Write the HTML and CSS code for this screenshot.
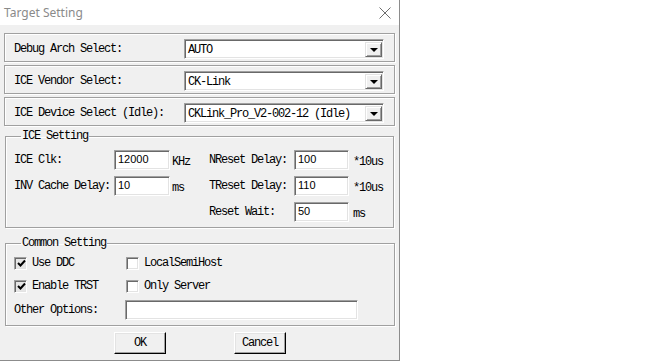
FILE: index.html
```html
<!DOCTYPE html>
<html lang="en">
<head>
  <meta charset="UTF-8" />
  <title>Target Setting</title>
  <link rel="stylesheet" href="styles.css">
</head>
<body>
  <div class="dialog">
    <div class="titlebar">
      <span class="title">Target Setting</span>
      <svg class="close" width="12" height="12" viewBox="0 0 12 12">
        <path d="M0.5 0.5 L11.5 11.5 M11.5 0.5 L0.5 11.5" stroke="#6e6e6e" stroke-width="1" fill="none"/>
      </svg>
    </div>

    <div class="content">
      <!-- top selectors -->
      <div class="select-box">
        <span class="label">Debug Arch Select:</span>
        <div class="combo"><span class="combo-text">AUTO</span><span class="combo-btn"></span></div>
      </div>
      <div class="select-box">
        <span class="label">ICE Vendor Select:</span>
        <div class="combo"><span class="combo-text">CK-Link</span><span class="combo-btn"></span></div>
      </div>
      <div class="select-box">
        <span class="label">ICE Device Select (Idle):</span>
        <div class="combo"><span class="combo-text">CKLink_Pro_V2-002-12 (Idle)</span><span class="combo-btn"></span></div>
      </div>

      <!-- ICE Setting -->
      <fieldset class="group ice">
        <legend>ICE Setting</legend>
        <div class="ice-grid">
          <span class="label">ICE Clk:</span>
          <div class="field">12000</div>
          <span class="unit">KHz</span>
          <span class="label">NReset Delay:</span>
          <div class="field">100</div>
          <span class="unit unit-r">*10us</span>

          <span class="label">INV Cache Delay:</span>
          <div class="field">10</div>
          <span class="unit">ms</span>
          <span class="label">TReset Delay:</span>
          <div class="field">110</div>
          <span class="unit unit-r">*10us</span>

          <span></span>
          <span></span>
          <span></span>
          <span class="label">Reset Wait:</span>
          <div class="field">50</div>
          <span class="unit unit-r">ms</span>
        </div>
      </fieldset>

      <!-- Common Setting -->
      <fieldset class="group common">
        <legend>Common Setting</legend>
        <div class="check-grid">
          <label class="check"><span class="box checked"><svg width="9" height="9" viewBox="0 0 9 9"><path d="M1 4 L3.5 6.5 L8 1.5" stroke="#000" stroke-width="2" fill="none"/></svg></span>Use DDC</label>
          <label class="check"><span class="box"></span>LocalSemiHost</label>
          <label class="check row2"><span class="box checked"><svg width="9" height="9" viewBox="0 0 9 9"><path d="M1 4 L3.5 6.5 L8 1.5" stroke="#000" stroke-width="2" fill="none"/></svg></span>Enable TRST</label>
          <label class="check row2"><span class="box"></span>Only Server</label>
          <span class="label row3">Other Options:</span>
          <div class="field wide row3"></div>
        </div>
      </fieldset>

      <div class="buttons">
        <button class="btn">OK</button>
        <button class="btn">Cancel</button>
      </div>
    </div>
  </div>
</body>
</html>
```

FILE: styles.css
```css
body {
  margin: 0;
  background-color: #fff;
  font-family: "Liberation Mono", monospace;
  font-size: 12px;
  letter-spacing: -1.2px;
  color: #000;
}

.dialog {
  width: 400px;
  height: 361px;
  box-sizing: border-box;
  background-color: #f0f0f0;
  border-right: 1px solid #8c8c8c;
  border-bottom: 1px solid #8c8c8c;
}

.titlebar {
  height: 25px;
  background-color: #fff;
  display: flex;
  align-items: center;
  justify-content: space-between;
  padding: 0 8px 0 4px;
}

.title {
  font-family: "Noto Sans", sans-serif;
  font-size: 12px;
  letter-spacing: 0;
  color: #8a8a8a;
}

.close {
  margin-top: 1px;
}

.content {
  padding: 8px 4px 0 4px;
}

.select-box {
  height: 29px;
  box-sizing: border-box;
  border: 1px solid #a0a0a0;
  box-shadow: inset 1px 1px 0 #fff, 1px 1px 0 #fff;
  display: flex;
  align-items: center;
  padding: 5px 10px 2px 9px;
  margin-bottom: 3px;
}

.select-box .label {
  width: 170px;
}

.combo {
  width: 200px;
  height: 20px;
  box-sizing: border-box;
  display: flex;
  align-items: stretch;
  background-color: #fff;
  border: 1px solid;
  border-color: #a0a0a0 #fff #fff #a0a0a0;
  box-shadow: inset 1px 1px 0 #696969, inset -1px -1px 0 #e3e3e3;
  padding: 2px 1px 1px 2px;
}

.combo-text {
  flex: 1;
  line-height: 16px;
  padding-left: 1px;
}

.combo-btn {
  width: 17px;
  box-sizing: border-box;
  background-color: #f0f0f0;
  border: 1px solid;
  border-color: #e3e3e3 #696969 #696969 #e3e3e3;
  box-shadow: inset 1px 1px 0 #fff, inset -1px -1px 0 #a0a0a0;
  display: flex;
  align-items: center;
  justify-content: center;
}

.combo-btn::after {
  content: "";
  border-left: 4px solid transparent;
  border-right: 4px solid transparent;
  border-top: 4px solid #000;
  margin-top: 1px;
}

.group {
  margin: 0;
  padding: 0;
  border: 1px solid #a0a0a0;
  box-shadow: inset 1px 1px 0 #fff, 1px 1px 0 #fff;
}

.group legend {
  margin-left: 7px;
  padding: 0 1px;
  line-height: 14px;
}

.ice {
  margin: 3px 1px 0 1px;
  padding: 7px 0 5px 8px;
}

.ice-grid {
  display: grid;
  grid-template-columns: 100px 56px 39px 85px 55px auto;
  grid-auto-rows: 20px;
  row-gap: 6px;
  align-items: center;
}

.field {
  height: 20px;
  box-sizing: border-box;
  background-color: #fff;
  border: 1px solid;
  border-color: #a0a0a0 #fff #fff #a0a0a0;
  box-shadow: inset 1px 1px 0 #696969, inset -1px -1px 0 #e3e3e3;
  font-family: "Liberation Sans", Arial, sans-serif;
  font-size: 11px;
  letter-spacing: 0;
  line-height: 16px;
  padding-left: 3px;
}

.unit {
  padding-left: 2px;
  padding-top: 4px;
}

.unit-r {
  padding-left: 4px;
}

.common {
  margin: 8px 0 0 1px;
  padding: 5px 0 5px 8px;
}

.check-grid {
  display: grid;
  grid-template-columns: 112px 233px;
  align-items: center;
}

.check {
  display: flex;
  align-items: center;
  height: 16px;
}

.check.row2 {
  margin-top: 7px;
}

.box {
  width: 13px;
  height: 13px;
  box-sizing: border-box;
  background-color: #fff;
  border: 1px solid;
  border-color: #a0a0a0 #fff #fff #a0a0a0;
  box-shadow: inset 1px 1px 0 #696969, inset -1px -1px 0 #e3e3e3;
  margin-right: 5px;
  display: flex;
  align-items: center;
  justify-content: center;
}

.box.checked {
  background-color: #e6e6e6;
}

.box svg {
  margin: 1px 0 0 1px;
}

.row3 {
  margin-top: 6px;
}

.field.wide {
  width: 233px;
  margin-left: -1px;
}

.buttons {
  display: flex;
  gap: 68px;
  padding: 6px 0 0 110px;
}

.btn {
  width: 52px;
  height: 22px;
  margin: 0;
  padding: 0;
  box-sizing: border-box;
  background-color: #f0f0f0;
  border: 1px solid;
  border-color: #fff #000 #000 #fff;
  box-shadow: inset -1px -1px 0 #a0a0a0, inset 1px 1px 0 #e3e3e3;
  font-family: "Liberation Mono", monospace;
  font-size: 12px;
  letter-spacing: -1.2px;
  color: #000;
}
```
